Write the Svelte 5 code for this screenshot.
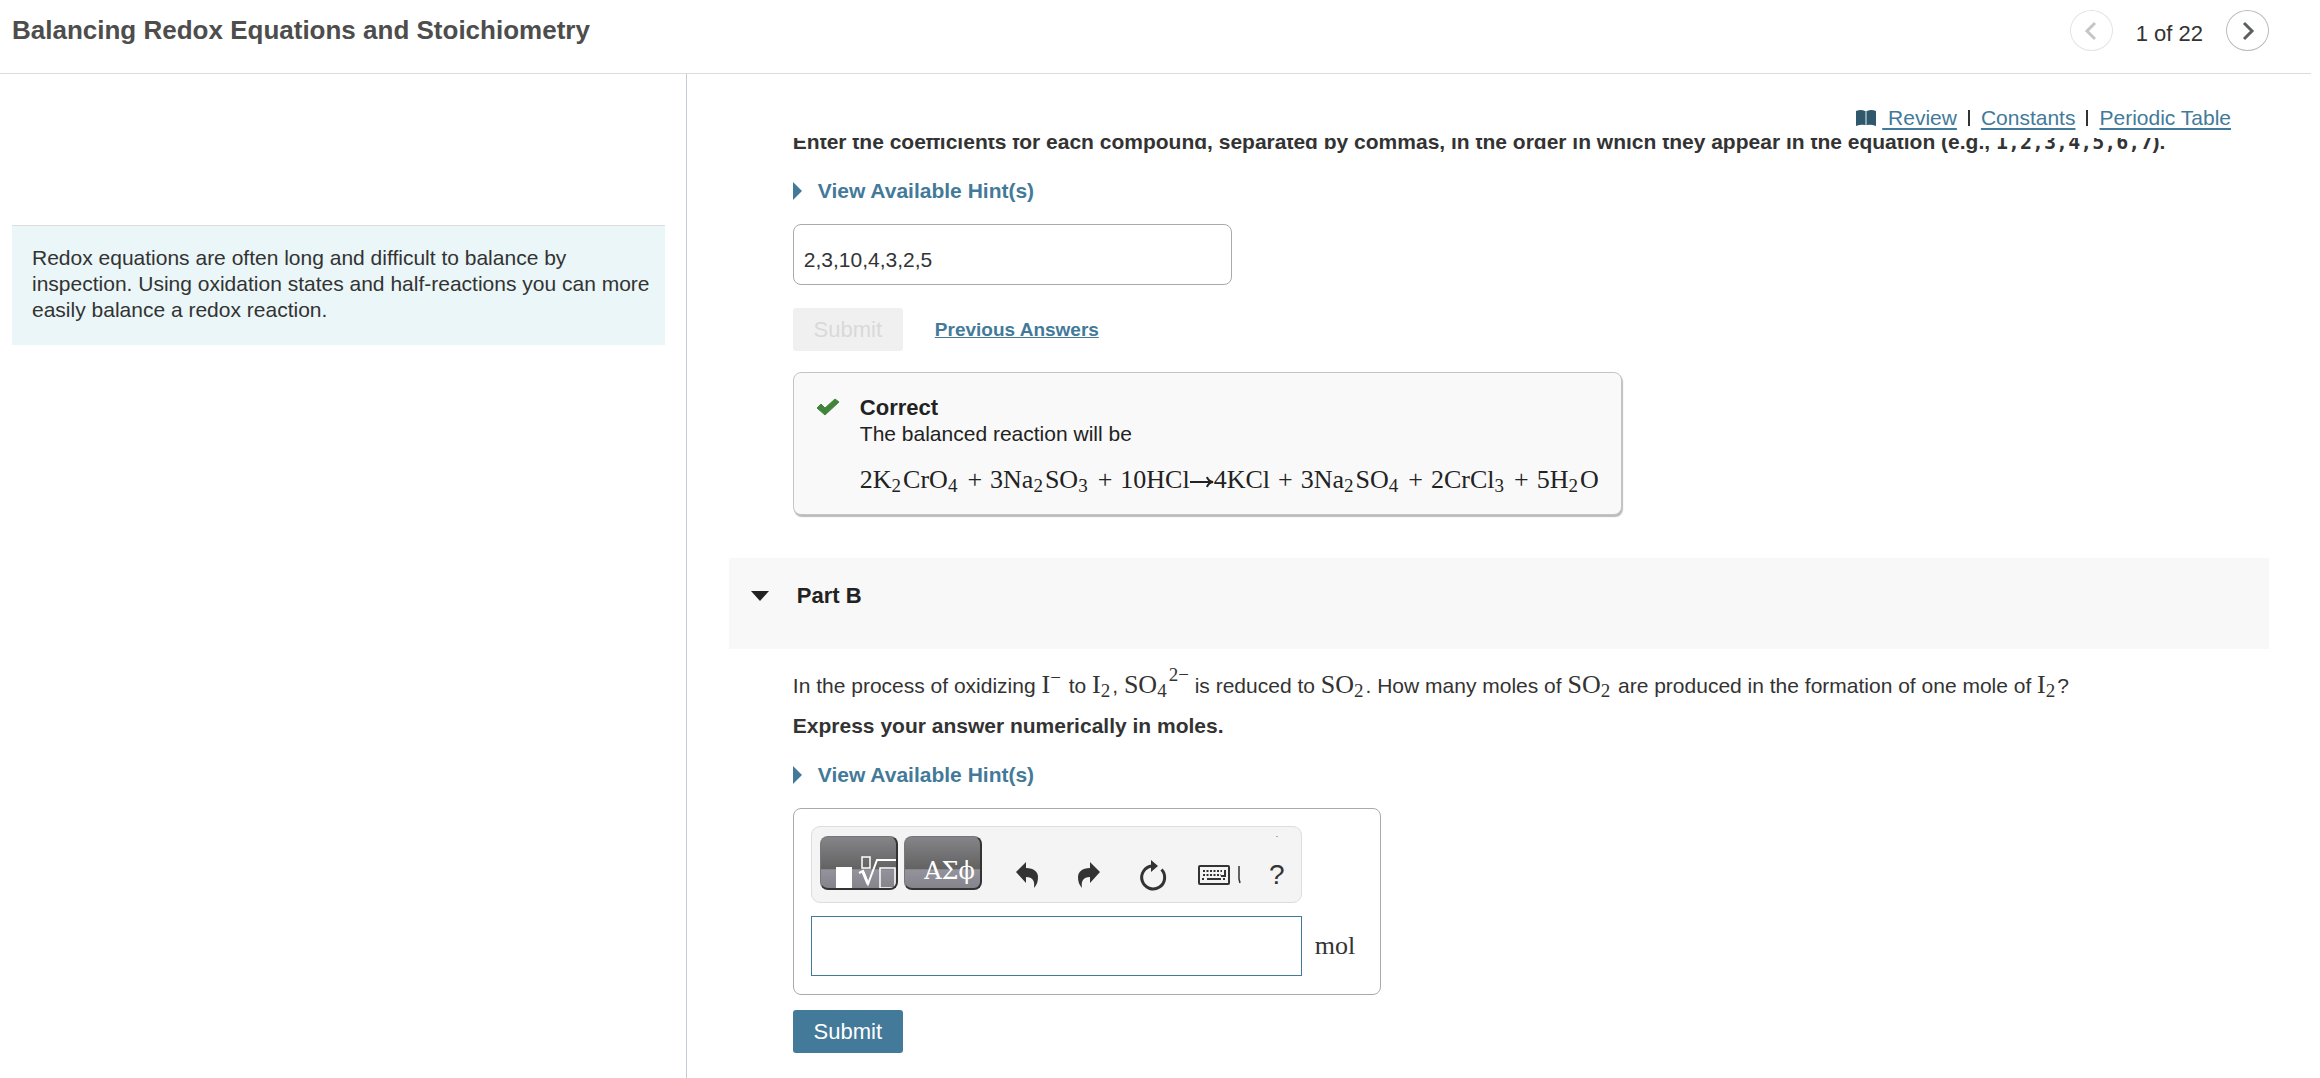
<script>
    let partAAnswer = $state('2,3,10,4,3,2,5');
    let partBAnswer = $state('');
    let partBOpen = $state(true);

    // Each term is a coefficient plus [element group, subscript] pairs
    const reactants = [
        { coefficient: '2', parts: [['K', '2'], ['CrO', '4']] },
        { coefficient: '3', parts: [['Na', '2'], ['SO', '3']] },
        { coefficient: '10', parts: [['HCl']] }
    ];

    const products = [
        { coefficient: '4', parts: [['KCl']] },
        { coefficient: '3', parts: [['Na', '2'], ['SO', '4']] },
        { coefficient: '2', parts: [['CrCl', '3']] },
        { coefficient: '5', parts: [['H', '2'], ['O']] }
    ];
</script>

{#snippet side(terms)}
    {#each terms as term, i}{#if i > 0}<span class="plus">+</span>{/if}{term.coefficient}{#each term.parts as [group, count]}{group}{#if count}<sub>{count}</sub>{/if}{/each}{/each}
{/snippet}

{#snippet hints()}
    <button type="button" class="hints">
        <svg width="9" height="18" viewBox="0 0 9 18" aria-hidden="true"><path d="M0 0 9 9 0 18z" fill="currentColor" /></svg>
        View Available Hint(s)
    </button>
{/snippet}

<div class="page">
    <header>
        <h1>Balancing Redox Equations and Stoichiometry</h1>
        <nav class="pager" aria-label="Items">
            <button type="button" class="round" aria-label="Previous item" disabled>
                <svg width="12" height="20" viewBox="0 0 12 20"><path d="M10 2 2 10l8 8" /></svg>
            </button>
            <span>1 of 22</span>
            <button type="button" class="round" aria-label="Next item">
                <svg width="12" height="20" viewBox="0 0 12 20"><path d="m2 2 8 8-8 8" /></svg>
            </button>
        </nav>
    </header>

    <div class="columns">
        <aside>
            <p class="intro">
                Redox equations are often long and difficult to balance by inspection. Using oxidation states
                and half-reactions you can more easily balance a redox reaction.
            </p>
        </aside>

        <main>
            <nav class="resources" aria-label="Resources">
                <svg width="20" height="17" viewBox="0 0 20 17" aria-hidden="true">
                    <path d="M0 1Q5-1 9 1V15Q5 14 0 16zM11 1Q15-1 20 1V16Q15 14 11 15z" fill="#2f586d" />
                    <path d="M9 1h2v14H9z" fill="#8ba3b0" />
                </svg>
                <a href="#review">&nbsp;Review</a>
                <span class="bar"></span>
                <a href="#constants">Constants</a>
                <span class="bar"></span>
                <a href="#periodic-table">Periodic Table</a>
            </nav>

            <div class="scroller">
                <section class="part">
                    <p class="instructions clipped">
                        Enter the coefficients for each compound, separated by commas, in the order in which they
                        appear in the equation (e.g., <code>1,2,3,4,5,6,7</code>).
                    </p>
                    {@render hints()}
                    <input class="answer" type="text" aria-label="Part A answer" bind:value={partAAnswer} />
                    <div class="actions">
                        <button type="button" class="submit" disabled>Submit</button>
                        <a class="previous" href="#previous">Previous Answers</a>
                    </div>
                    <div class="feedback">
                        <svg width="24" height="18" viewBox="0 0 24 18" aria-hidden="true">
                            <path d="M1 10 5 6 9 10 19 1 23 4 9 17z" fill="#42843c" stroke="#42843c" stroke-linejoin="round" />
                        </svg>
                        <div>
                            <h2>Correct</h2>
                            <p>The balanced reaction will be</p>
                            <p class="math equation">{@render side(reactants)}<svg class="arrow" width="24" height="12" viewBox="0 0 24 12" role="img" aria-label="yields"><path d="M0 6h22M17 1q1 4 6 5q-5 1-6 5" /></svg>{@render side(products)}</p>
                        </div>
                    </div>
                </section>

                <h2 class="part-bar">
                    <button type="button" aria-expanded={partBOpen} onclick={() => (partBOpen = !partBOpen)}>
                        <svg width="18" height="10" viewBox="0 0 18 10" aria-hidden="true"><path d="M0 0h18L9 10z" fill="#222" /></svg>
                        Part B
                    </button>
                </h2>

                {#if partBOpen}
                    <section class="part">
                        <p class="question">
                            In the process of oxidizing <span class="math">I<sup>−</sup></span> to
                            <span class="math">I<sub>2</sub></span>,
                            <span class="math">SO<sub>4</sub><sup class="high">2−</sup></span> is reduced to
                            <span class="math">SO<sub>2</sub></span>. How many moles of
                            <span class="math">SO<sub>2</sub></span> are produced in the formation of one mole of
                            <span class="math">I<sub>2</sub></span>?
                        </p>
                        <p class="instructions">Express your answer numerically in moles.</p>
                        {@render hints()}

                        <div class="editor">
                            <div class="toolbar" role="toolbar" aria-label="Equation tools">
                                <button type="button" class="palette" aria-label="Templates">
                                    <svg width="76" height="52" viewBox="0 0 76 52">
                                        <path d="M15 30h16v22H15z" fill="#fff" />
                                        <path d="M41 20h8v11h-8zM59 31h15v20H59z" fill="none" stroke="#fff" stroke-width="1.500" />
                                        <path d="m38 36 4-2 5 13 9-24h19" fill="none" stroke="#fff" stroke-width="2" />
                                        <path d="m42 35 5 12" stroke="#fff" stroke-width="3" />
                                    </svg>
                                </button>
                                <button type="button" class="palette symbols">ΑΣϕ</button>
                                <div class="tools">
                                    <button type="button" aria-label="Undo">
                                        <svg width="22" height="26" viewBox="0 0 22 26"><path d="M0 10 10 0v6c8 0 12 4 12 9 0 4-1 8-4 11 1-7-1-11-8-11v6z" /></svg>
                                    </button>
                                    <button type="button" aria-label="Redo">
                                        <svg width="22" height="26" viewBox="0 0 22 26"><path d="M22 10 12 0v6C4 6 0 10 0 15c0 4 1 8 4 11-1-7 1-11 8-11v6z" /></svg>
                                    </button>
                                    <button type="button" aria-label="Reset">
                                        <svg width="28" height="30" viewBox="0 0 28 30">
                                            <path d="M14 6A11.500 11.500 0 1 0 23.500 9.500" fill="none" stroke="#333" stroke-width="3" />
                                            <path d="m13 0 7 6-7 6z" />
                                        </svg>
                                    </button>
                                    <button type="button" aria-label="Keyboard shortcuts">
                                        <svg width="32" height="20" viewBox="0 0 32 20">
                                            <rect x="1" y="1" width="30" height="18" rx="1" fill="none" stroke="#333" stroke-width="2" />
                                            <path d="M5 6h19M5 10h18M4 14h3M25 14h2" fill="none" stroke="#333" stroke-width="2" stroke-dasharray="2 1.500" />
                                            <path d="M9 14h14M27 5v6h-4" fill="none" stroke="#333" stroke-width="2" />
                                            <path d="M41 1v13l1 4" fill="none" stroke="#333" stroke-width="1.500" />
                                        </svg>
                                    </button>
                                    <button type="button" class="help" aria-label="Help">?</button>
                                </div>
                            </div>
                            <div class="entry">
                                <input type="text" aria-label="Part B answer in moles" bind:value={partBAnswer} />
                                <span class="unit">mol</span>
                            </div>
                        </div>

                        <button type="button" class="submit">Submit</button>
                    </section>
                {/if}
            </div>
        </main>
    </div>
</div>

<style>
    :global(body) {
        background: #fff;
        color: #333;
        font: 21px/26px "Liberation Sans", Arial, sans-serif;
    }

    h1,
    h2,
    p {
        margin: 0;
    }

    button,
    input {
        box-sizing: border-box;
        font-family: inherit;
        color: inherit;
    }

    button {
        padding: 0;
        border: 0;
        background: none;
        cursor: pointer;
    }

    svg {
        display: block;
        flex: none;
        overflow: visible;
    }

    a {
        color: #437a99;
    }

    .page {
        display: flex;
        flex-direction: column;
        min-height: 100vh;
        margin-right: 9px;
    }

    header {
        display: flex;
        justify-content: space-between;
        padding: 10px 42px 22px 12px;
        border-bottom: 1px solid #ddd;
    }

    h1 {
        color: #4d4d4d;
        font-size: 26px;
        line-height: 40px;
    }

    .pager {
        display: flex;
        align-items: center;
        gap: 23px;
        font-size: 22px;
    }

    .pager span {
        padding-top: 6px;
    }

    .round {
        display: grid;
        place-items: center;
        width: 43px;
        height: 41px;
        border: 1px solid #bbb;
        border-radius: 50%;
    }

    .round path {
        fill: none;
        stroke: #5b5f62;
        stroke-width: 3;
    }

    .round:disabled {
        border-color: #e3e3e3;
        cursor: default;
    }

    .round:disabled path {
        stroke: #c6c6c6;
    }

    .columns {
        display: flex;
        flex: 1;
    }

    aside {
        box-sizing: border-box;
        flex: 0 0 29.72%;
        padding: 151px 21px 0 12px;
        border-right: 1px solid #c5cad8;
    }

    .intro {
        padding: 19px 12px 22px 20px;
        border-top: 1px solid #ddd;
        background: #eaf6f7;
    }

    main {
        flex: 1;
        min-width: 0;
        padding: 27px 42px 0;
    }

    .resources {
        display: flex;
        align-items: center;
        justify-content: flex-end;
        gap: 11px;
        height: 34px;
        margin: 0 38px 3px 0;
    }

    .resources a {
        text-decoration-thickness: 2px;
        text-underline-offset: 3px;
    }

    .resources svg {
        margin-right: -5px;
    }

    .bar {
        width: 2px;
        height: 16px;
        background: #333;
    }

    .scroller {
        overflow: hidden;
    }

    .part {
        display: flex;
        flex-direction: column;
        align-items: flex-start;
        padding: 0 64px;
    }

    .instructions {
        font-weight: bold;
    }

    .clipped {
        margin-top: -9px;
    }

    code {
        font: bold 20px/20px "DejaVu Sans Mono", "Liberation Mono", monospace;
    }

    .hints {
        display: flex;
        align-items: center;
        gap: 16px;
        margin: 23px 0 20px;
        color: #437a99;
        font-size: 21px;
        font-weight: bold;
        line-height: 26px;
    }

    .answer {
        width: 439px;
        height: 61px;
        padding: 10px 10px 0;
        border: 1px solid #aaa;
        border-radius: 8px;
        font-size: 21px;
    }

    .actions {
        display: flex;
        align-items: center;
        gap: 32px;
        margin: 23px 0 21px;
    }

    .submit {
        width: 110px;
        height: 43px;
        border-radius: 3px;
        background: #437a99;
        color: #fff;
        font-size: 22px;
    }

    .submit:disabled {
        background: #f0f0f0;
        color: #d9d9d9;
        cursor: default;
    }

    .previous {
        font-size: 19px;
        font-weight: bold;
    }

    .feedback {
        display: flex;
        gap: 20px;
        padding: 22px 22px 18px;
        border: 1px solid #c4c4c4;
        border-radius: 8px;
        background: #f9f9f9;
        box-shadow: 1px 2px 1px #bbb;
        color: #222;
    }

    .feedback > svg {
        margin-top: 3px;
    }

    .feedback h2 {
        font-size: 22px;
        line-height: 26px;
    }

    .math {
        font-family: "Liberation Serif", "Times New Roman", serif;
        font-size: 26px;
        line-height: 26px;
    }

    .math sub,
    .math sup {
        margin-right: 2px;
        font-size: 19px;
        line-height: 0;
    }

    .math sub {
        vertical-align: -4px;
    }

    .math sup {
        vertical-align: 9px;
    }

    .math .high {
        margin-right: 0;
        vertical-align: 12px;
    }

    .equation {
        padding: 20px 0 3px;
        white-space: nowrap;
    }

    .plus {
        margin: 0 8px;
    }

    .arrow {
        display: inline-block;
        fill: none;
        stroke: #222;
        stroke-width: 2;
    }

    .part-bar {
        margin: 43px 0 23px;
        padding: 25px 22px 40px;
        background: #f8f8f8;
    }

    .part-bar button {
        display: flex;
        align-items: center;
        gap: 28px;
        color: #222;
        font-size: 22px;
        font-weight: bold;
        line-height: 26px;
    }

    .question {
        padding-bottom: 14px;
    }

    .editor {
        margin-bottom: 15px;
        padding: 17px 25px 18px 17px;
        border: 1px solid #aaa;
        border-radius: 8px;
    }

    .toolbar {
        display: flex;
        gap: 6px;
        box-sizing: border-box;
        width: 491px;
        padding: 9px 8px 11px;
        border: 1px solid #ddd;
        border-radius: 9px;
        background: #f4f4f4;
    }

    .palette {
        width: 78px;
        height: 54px;
        overflow: hidden;
        border: 1px solid #777;
        border-right: 2px solid #333;
        border-bottom: 2px solid #333;
        border-radius: 8px;
        background: linear-gradient(#858488, #626262 63%, #94939b 64%, #85848c);
    }

    .symbols {
        padding: 16px 5px 0 0;
        color: #fff;
        font-family: "DejaVu Serif", "Liberation Serif", serif;
        font-size: 24px;
        text-align: right;
    }

    .tools {
        display: flex;
        flex: 1;
        justify-content: space-between;
        padding: 23px 0 0 23px;
    }

    .tools button {
        display: grid;
        place-items: center;
        width: 32px;
        height: 32px;
    }

    .tools path {
        fill: #333;
    }

    .tools path[fill="none"] {
        fill: none;
    }

    .tools .help {
        position: relative;
        font-size: 28px;
    }

    .help::before {
        content: "";
        position: absolute;
        top: -23px;
        left: 15px;
        width: 2px;
        height: 1px;
        background: #aaa;
    }

    .entry {
        display: flex;
        align-items: center;
        gap: 13px;
        margin-top: 13px;
    }

    .entry input {
        width: 491px;
        height: 60px;
        padding: 0 10px;
        border: 1px solid #437a99;
        font-size: 24px;
    }

    .unit {
        font-family: "Liberation Serif", serif;
        font-size: 26px;
    }
</style>
